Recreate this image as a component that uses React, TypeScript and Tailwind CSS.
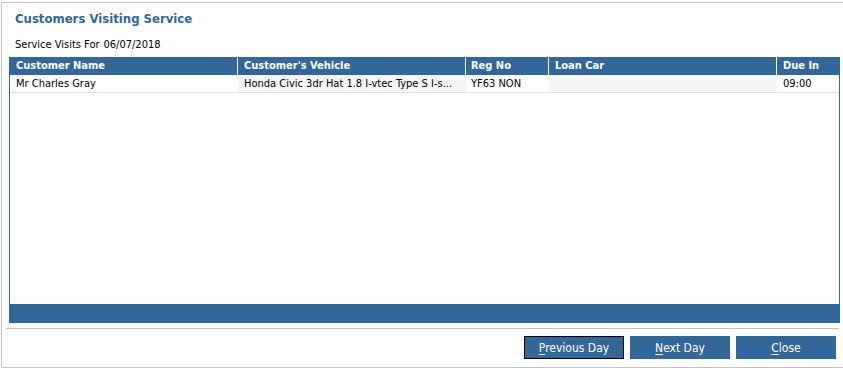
import React from "react";

const font = { fontFamily: '"DejaVu Sans Condensed", "DejaVu Sans", sans-serif' };

function U({ c }: { c: string }) {
  return <span className="underline underline-offset-2">{c}</span>;
}

export default function App() {
  return (
    <div className="w-[843px] h-[373px] bg-white overflow-hidden" style={font}>
      <div className="ml-[1px] mt-[2px] h-[366px] border-l border-t border-b border-[#c4c4c4] flex flex-col">
        <div className="pl-[13px] pt-[8px] h-[24px] text-[13px] leading-[16px] font-bold text-[#336699]">
          Customers Visiting Service
        </div>
        <div className="pl-[13px] mt-[11px] h-[14px] text-[11px] leading-[14px] text-black flex">
          <span>Service Visits For</span>
          <span className="ml-[4px]">06/07/2018</span>
        </div>
        <div className="ml-[7px] mt-[5px] w-[831px] h-[266px] flex flex-col">
          <div className="flex h-[18px] bg-[#336699] text-white text-[11px] font-bold leading-[18px]">
            <div className="w-[229px] border-r border-white pl-[7px]">Customer Name</div>
            <div className="w-[228px] border-r border-white pl-[6px]">Customer's Vehicle</div>
            <div className="w-[83px] border-r border-white pl-[5px]">Reg No</div>
            <div className="w-[228px] border-r border-white pl-[6px]">Loan Car</div>
            <div className="flex-1 pl-[6px]">Due In</div>
          </div>
          <div className="flex-1 border-l border-r border-[#336699] bg-white">
            <div className="flex h-[18px] border-b border-[#e0e0e0] text-[11px] leading-[18px] text-black">
              <div className="w-[228px] pl-[6px]">Mr Charles Gray</div>
              <div className="w-[228px] pl-[6px] bg-[#f5f5f5] whitespace-nowrap overflow-hidden">
                Honda Civic 3dr Hat 1.8 I-vtec Type S I-s...
              </div>
              <div className="w-[83px] pl-[5px]">YF63 NON</div>
              <div className="w-[228px] bg-[#f5f5f5]"></div>
              <div className="flex-1 pl-[6px]">09:00</div>
            </div>
          </div>
          <div className="h-[19px] bg-[#336699]"></div>
        </div>
        <div className="ml-[4px] mt-[5px] h-[1px] w-[833px] bg-[#c4c4c4]"></div>
        <div className="flex justify-end gap-[6px] mt-[7px] pr-[2px] w-[836px]">
          <button className="w-[100px] h-[23px] bg-[#336699] text-white text-[12px] border border-black">
            <U c="P" />revious Day
          </button>
          <button className="w-[100px] h-[23px] bg-[#336699] text-white text-[12px]">
            <U c="N" />ext Day
          </button>
          <button className="w-[100px] h-[23px] bg-[#336699] text-white text-[12px]">
            <U c="C" />lose
          </button>
        </div>
      </div>
    </div>
  );
}
